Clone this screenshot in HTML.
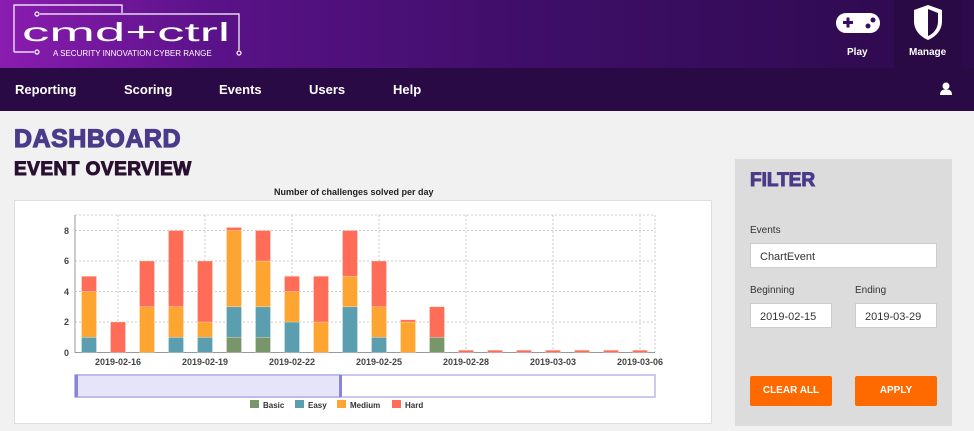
<!DOCTYPE html>
<html><head><meta charset="utf-8"><style>
*{margin:0;padding:0;box-sizing:border-box}
body{width:974px;height:431px;overflow:hidden;background:#f1f1f1;font-family:"Liberation Sans",sans-serif;position:relative}
.hdr{position:absolute;left:0;top:0;width:974px;height:68px;background:linear-gradient(90deg,#8a1cb0 0%,#5a1288 22%,#3e0e68 55%,#2c0a4c 100%)}
.nav{position:absolute;left:0;top:68px;width:974px;height:43px;background:#2a0a44}
.nav span{position:absolute;top:14px;color:#fff;font-weight:bold;font-size:13px}
.mg{position:absolute;left:894px;top:0;width:68px;height:68px;background:#2a0a44}
.ab{position:absolute;color:#fff;font-size:10px;font-weight:bold}
.h1{position:absolute;left:14px;top:125px;font-size:25px;color:#4b3a8a;font-weight:bold;-webkit-text-stroke:1.2px #4b3a8a;letter-spacing:0.5px}
.h2{position:absolute;left:14px;top:159px;font-size:19px;color:#2a1030;font-weight:bold;-webkit-text-stroke:1px #2a1030;letter-spacing:0.5px}
.chart{position:absolute;left:14px;top:200px;width:698px;height:224px;background:#fff;border:1px solid #ddd}
.ttl{position:absolute;left:274px;top:187px;font-size:9px;font-weight:bold;color:#222}
.fp{position:absolute;left:735px;top:159px;width:217px;height:267px;background:#dcdcdc}
.fp .l{position:absolute;font-size:10px;color:#333}
.fp .i{position:absolute;background:#fff;border:1px solid #ccc;font-size:11px;color:#333;padding:7px 9px;height:25px}
.fp .b{position:absolute;background:#ff6a00;color:#fff;font-weight:bold;font-size:10px;text-align:center;line-height:30px;height:30px;border-radius:2px}
</style></head><body>
<div class="hdr"></div>
<div class="mg"></div>
<svg style="position:absolute;left:0;top:0" width="260" height="68">
<g fill="none" stroke="#fff" stroke-width="1.2">
<path d="M14 52V5H122V13"/><path d="M40 14H239V50"/><circle cx="37" cy="14" r="2"/><path d="M14 52H34"/><circle cx="37" cy="52" r="2"/><circle cx="239" cy="53" r="2"/>
</g>
<text x="22" y="41" fill="#fff" font-size="26" font-family="Liberation Sans" textLength="208" lengthAdjust="spacingAndGlyphs">cmd+ctrl</text>
<text x="53" y="56" fill="#fff" font-size="8">A SECURITY INNOVATION CYBER RANGE</text>
</svg>
<svg style="position:absolute;left:834px;top:9px" width="48" height="28" viewBox="0 0 48 28"><rect x="2" y="4" width="44" height="20" rx="10" fill="#fff"/><rect x="9" y="12" width="10" height="3" fill="#3a0d62"/><rect x="12.5" y="8.5" width="3" height="10" fill="#3a0d62"/><circle cx="34" cy="17" r="2.5" fill="#3a0d62"/><circle cx="39" cy="11" r="2.5" fill="#3a0d62"/></svg>
<div class="ab" style="left:847px;top:47px">Play</div>
<svg style="position:absolute;left:912px;top:4px" width="32" height="38" viewBox="0 0 32 38"><path d="M16 1L30 6V17C30 27 23 33 16 36C9 33 2 27 2 17V6Z" fill="#fff"/><path d="M16 5L26 9V17C26 25 21 30 16 32Z" fill="#2a0a44"/></svg>
<div class="ab" style="left:909px;top:47px">Manage</div>
<div class="nav"><span style="left:15px">Reporting</span><span style="left:124px">Scoring</span><span style="left:219px">Events</span><span style="left:309px">Users</span><span style="left:393px">Help</span>
<svg style="position:absolute;left:940px;top:14px" width="12" height="14"><circle cx="6" cy="4" r="3.5" fill="#fff"/><path d="M0 13C0 8 3 7.5 6 7.5S12 8 12 13Z" fill="#fff"/></svg></div>
<div class="h1">DASHBOARD</div>
<div class="h2">EVENT OVERVIEW</div>
<div class="ttl">Number of challenges solved per day</div>
<div class="chart"></div>
<svg style="position:absolute;left:0;top:0" width="720" height="431" font-family="Liberation Sans" font-size="9" font-weight="bold" fill="#444">
<g stroke="#ccc" stroke-dasharray="2,2" stroke-width="1">
<line x1="75" y1="215" x2="655" y2="215"/><line x1="75" y1="230.5" x2="655" y2="230.5"/><line x1="75" y1="261" x2="655" y2="261"/><line x1="75" y1="291.5" x2="655" y2="291.5"/><line x1="75" y1="322" x2="655" y2="322"/>
<line x1="118" y1="215" x2="118" y2="352"/><line x1="205" y1="215" x2="205" y2="352"/><line x1="292" y1="215" x2="292" y2="352"/><line x1="379" y1="215" x2="379" y2="352"/><line x1="466" y1="215" x2="466" y2="352"/><line x1="553" y1="215" x2="553" y2="352"/><line x1="640" y1="215" x2="640" y2="352"/><line x1="655" y1="215" x2="655" y2="352"/>
</g>
<line x1="75" y1="215" x2="75" y2="353" stroke="#999"/><line x1="75" y1="352.5" x2="655" y2="352.5" stroke="#999"/>
<g text-anchor="end"><text x="69" y="356">0</text><text x="69" y="325">2</text><text x="69" y="295">4</text><text x="69" y="264">6</text><text x="69" y="234">8</text></g>
<g text-anchor="middle"><text x="118" y="365">2019-02-16</text><text x="205" y="365">2019-02-19</text><text x="292" y="365">2019-02-22</text><text x="379" y="365">2019-02-25</text><text x="466" y="365">2019-02-28</text><text x="553" y="365">2019-03-03</text><text x="640" y="365">2019-03-06</text></g>
<g id="bars"></g>
<rect x="75" y="375" width="580" height="22" fill="#fff" stroke="#bbb8ea" stroke-width="1.5"/>
<rect x="75" y="375" width="265" height="22" fill="#e6e4f8" stroke="#9a94e0"/>
<rect x="75" y="375" width="3" height="22" fill="#8a84da"/><rect x="339" y="375" width="3" height="22" fill="#8a84da"/>
<g font-size="8" fill="#333"><rect x="250" y="400" width="9" height="8" fill="#78966a"/><text x="263" y="408">Basic</text><rect x="295" y="400" width="9" height="8" fill="#5a9eb0"/><text x="308" y="408">Easy</text><rect x="337" y="400" width="9" height="8" fill="#fda530"/><text x="350" y="408">Medium</text><rect x="392" y="400" width="9" height="8" fill="#ff6d58"/><text x="405" y="408">Hard</text></g>
</svg>
<script>
var d=[[0,1,3,1],[0,0,0,2],[0,0,3,3],[0,1,2,5],[0,1,1,4],[1,2,5,.2],[1,2,3,2],[0,2,2,1],[0,0,2,3],[0,3,2,3],[0,1,2,3],[0,0,2,.15],[1,0,0,2]];
for(var k=0;k<7;k++)d.push([0,0,0,.15]);
var c=["#78966a","#5a9eb0","#fda530","#ff6d58"],s="";
d.forEach(function(b,i){var x=89+29*i-7.5,y=352.5;b.forEach(function(v,j){if(!v)return;var h=v*15.25;y-=h;s+='<rect x="'+x+'" y="'+y+'" width="15" height="'+h+'" fill="'+c[j]+'" stroke="#fff" stroke-opacity=".4" stroke-width=".6"/>';});});
document.getElementById("bars").innerHTML=s;
</script>
<div class="fp">
<div style="position:absolute;left:15px;top:11px;font-size:19px;font-weight:bold;color:#4b3a8a;-webkit-text-stroke:1px #4b3a8a">FILTER</div>
<div class="l" style="left:15px;top:66px">Events</div>
<div class="i" style="left:15px;top:84px;width:187px">ChartEvent</div>
<div class="l" style="left:15px;top:126px">Beginning</div>
<div class="l" style="left:120px;top:126px">Ending</div>
<div class="i" style="left:15px;top:144px;width:82px">2019-02-15</div>
<div class="i" style="left:120px;top:144px;width:82px">2019-03-29</div>
<div class="b" style="left:15px;top:217px;width:82px">CLEAR ALL</div>
<div class="b" style="left:120px;top:217px;width:82px">APPLY</div>
</div>
</body></html>
